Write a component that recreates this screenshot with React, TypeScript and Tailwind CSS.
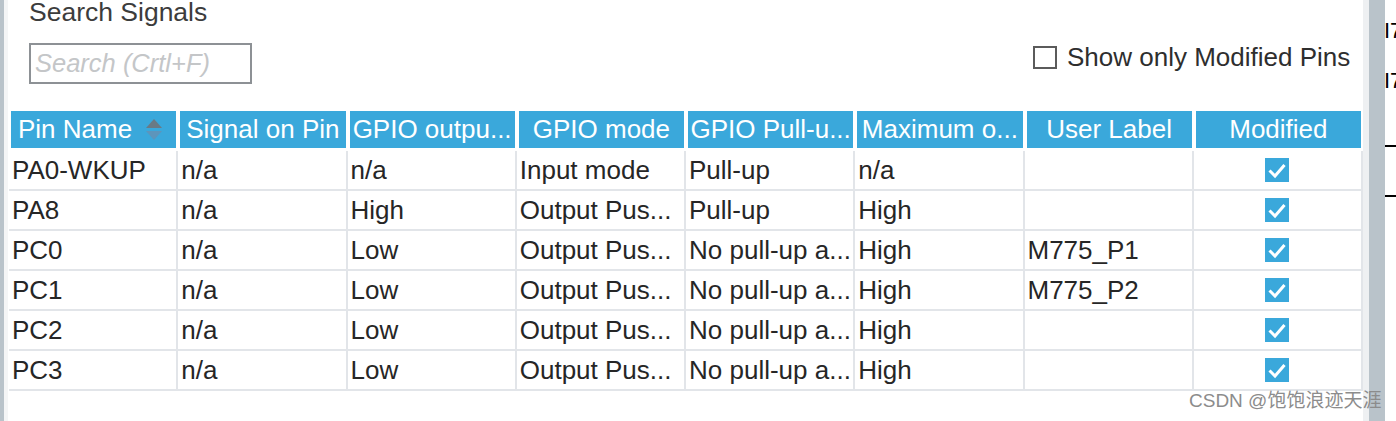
import React from "react";

type Row = {
  pin: string;
  signal: string;
  out: string;
  mode: string;
  pull: string;
  max: string;
  label: string;
};

const rows: Row[] = [
  { pin: "PA0-WKUP", signal: "n/a", out: "n/a", mode: "Input mode", pull: "Pull-up", max: "n/a", label: "" },
  { pin: "PA8", signal: "n/a", out: "High", mode: "Output Pus...", pull: "Pull-up", max: "High", label: "" },
  { pin: "PC0", signal: "n/a", out: "Low", mode: "Output Pus...", pull: "No pull-up a...", max: "High", label: "M775_P1" },
  { pin: "PC1", signal: "n/a", out: "Low", mode: "Output Pus...", pull: "No pull-up a...", max: "High", label: "M775_P2" },
  { pin: "PC2", signal: "n/a", out: "Low", mode: "Output Pus...", pull: "No pull-up a...", max: "High", label: "" },
  { pin: "PC3", signal: "n/a", out: "Low", mode: "Output Pus...", pull: "No pull-up a...", max: "High", label: "" },
];

const headers = [
  "Signal on Pin",
  "GPIO outpu...",
  "GPIO mode",
  "GPIO Pull-u...",
  "Maximum o...",
  "User Label",
  "Modified",
];

function SortIcon() {
  return (
    <svg width="18" height="22" viewBox="0 0 18 22" className="shrink-0">
      <polygon points="9,0 17,9 1,9" fill="#6a7a85" />
      <polygon points="1,12 17,12 9,21" fill="#5d95bb" />
    </svg>
  );
}

function CheckBox() {
  return (
    <div className="w-[24px] h-[24px] bg-[#3aa8db] flex items-center justify-center">
      <svg width="24" height="24" viewBox="0 0 24 24">
        <polyline
          points="4.5,12.5 10,18 19.5,7"
          fill="none"
          stroke="#ffffff"
          strokeWidth="3"
          strokeLinejoin="miter"
        />
      </svg>
    </div>
  );
}

function Cell({ children }: { children?: React.ReactNode }) {
  return (
    <div className="border-r-2 border-[#e2e5e9] pl-[3px] leading-[38px] whitespace-nowrap overflow-hidden text-[#262626]">
      {children}
    </div>
  );
}

export default function App() {
  return (
    <div className="relative flex w-[1396px] h-[421px] overflow-hidden bg-white font-['Liberation_Sans',Arial,sans-serif]">
      <div className="w-[4px] shrink-0 bg-[#b9c3ca]" />
      <div className="w-[4px] shrink-0 bg-[#f4f5f6]" />

      {/* main panel */}
      <div className="w-[1355px] shrink-0 bg-white flex flex-col">
        {/* top area */}
        <div className="h-[111px] flex shrink-0">
          <div className="w-[1025px] shrink-0 pl-[21px]">
            <div className="-mt-[1px] text-[26.5px] leading-[26px] text-[#3c3c3c]">Search Signals</div>
            <div className="mt-[18px] w-[223px] h-[41px] border-2 border-[#8d9195] flex items-center pl-[4px]">
              <span className="italic text-[25.5px] text-[#c4c6c8] leading-none">Search (Crtl+F)</span>
            </div>
          </div>
          <div className="pt-[44px] flex items-start">
            <div className="flex items-center gap-[10px]">
              <div className="w-[24px] h-[23px] border-2 border-[#5b5b5b] bg-white" />
              <span className="text-[26px] leading-[26px] text-[#2e2e2e]">Show only Modified Pins</span>
            </div>
          </div>
        </div>

        {/* table */}
        <div className="ml-[1px] w-[1354px] text-[26px]">
          <div className="mx-[2px] grid grid-cols-8 gap-x-[4px] h-[37px]">
            <div className="bg-[#3aa8db] text-white leading-[37px] pl-[7px] pr-[13px] flex items-center justify-between">
              <span>Pin Name</span>
              <SortIcon />
            </div>
            {headers.map((h) => (
              <div key={h} className="bg-[#3aa8db] text-white leading-[37px] text-center whitespace-nowrap overflow-hidden">
                {h}
              </div>
            ))}
          </div>
          <div className="mt-[3px]">
            {rows.map((r) => (
              <div key={r.pin} className="grid grid-cols-8 h-[40px] border-b-2 border-[#e2e5e9]">
                <Cell>{r.pin}</Cell>
                <Cell>{r.signal}</Cell>
                <Cell>{r.out}</Cell>
                <Cell>{r.mode}</Cell>
                <Cell>{r.pull}</Cell>
                <Cell>{r.max}</Cell>
                <Cell>{r.label}</Cell>
                <div className="border-r-2 border-[#e2e5e9] flex items-center justify-center">
                  <CheckBox />
                </div>
              </div>
            ))}
          </div>
        </div>
      </div>

      <div className="w-[6px] shrink-0 bg-[#eef0f2]" />
      <div className="w-[16px] shrink-0 bg-[#b9c3ca]" />

      {/* right clipped panel */}
      <div className="w-[11px] shrink-0 bg-white overflow-hidden flex flex-col">
        <div className="mt-[19px] text-[22px] leading-[24px] text-black whitespace-nowrap -ml-[1px]">I7</div>
        <div className="mt-[26px] text-[22px] leading-[24px] text-black whitespace-nowrap -ml-[1px]">I7</div>
        <div className="mt-[52px] h-[2px] bg-black" />
        <div className="mt-[48px] h-[2px] bg-black" />
      </div>

      <div className="absolute left-[1189px] top-[389px] text-[19px] leading-[24px] text-[#8c8c8c] whitespace-nowrap font-['Liberation_Sans','Noto_Sans_CJK_SC',sans-serif]">
        CSDN @饱饱浪迹天涯
      </div>
    </div>
  );
}
